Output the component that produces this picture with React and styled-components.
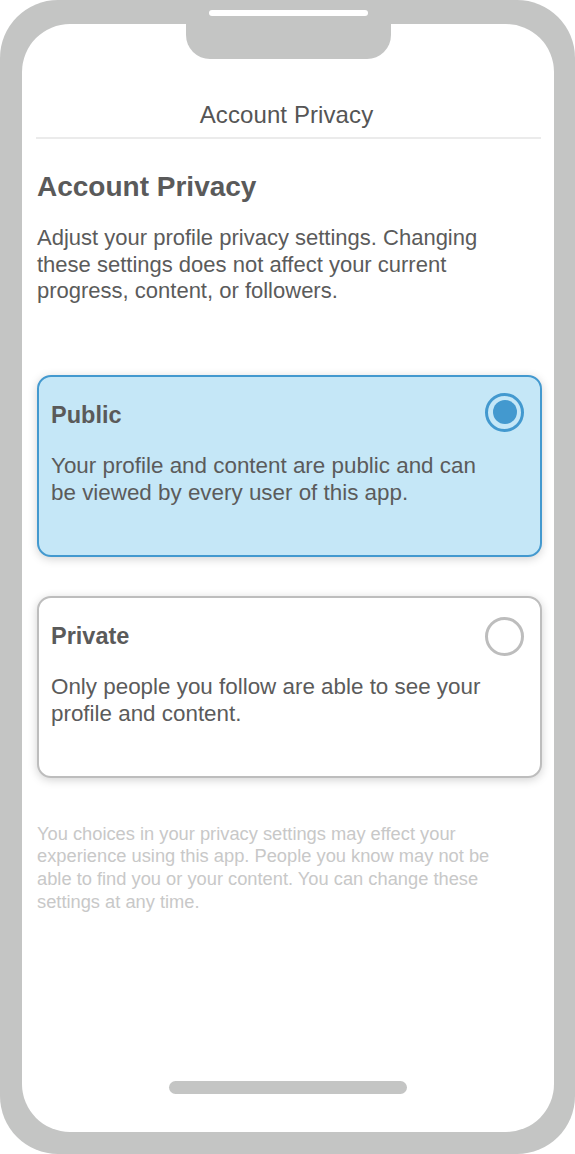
import styled, { createGlobalStyle } from "styled-components";

const options = [
  {
    id: "public",
    title: "Public",
    text: "Your profile and content are public and can be viewed by every user of this app.",
    selected: true,
  },
  {
    id: "private",
    title: "Private",
    text: "Only people you follow are able to see your profile and content.",
    selected: false,
  },
];

const GlobalStyle = createGlobalStyle`
  html, body {
    margin: 0;
    padding: 0;
    background: #ffffff;
  }
  body {
    font-family: "Liberation Sans", Arial, sans-serif;
    color: #5b5b5b;
  }
`;

const Phone = styled.div`
  position: relative;
  box-sizing: border-box;
  width: 575px;
  height: 1154px;
  padding: 24px 21px 22px 22px;
  background: #c4c5c4;
  border-radius: 58px;
`;

const Speaker = styled.div`
  position: absolute;
  top: 10px;
  left: 209px;
  width: 159px;
  height: 6px;
  border-radius: 3px;
  background: #ffffff;
`;

const Screen = styled.div`
  position: relative;
  height: 100%;
  background: #ffffff;
  border-radius: 48px;
  display: flex;
  flex-direction: column;
`;

const Notch = styled.div`
  position: absolute;
  top: -1px;
  left: 164px;
  width: 205px;
  height: 36px;
  background: #c4c5c4;
  border-radius: 0 0 24px 24px;
`;

const Header = styled.div`
  margin: 0 13px 0 14px;
  padding: 78px 4px 9px 0;
  border-bottom: 2px solid #ebebeb;
  text-align: center;
  font-size: 24px;
  line-height: 26px;
  letter-spacing: 0.1px;
  color: #555555;
`;

const Body = styled.div`
  flex: 1;
  display: flex;
  flex-direction: column;
  padding: 0 12px 0 15px;
`;

const Heading = styled.h1`
  margin: 33px 0 0;
  font-size: 28px;
  line-height: 30px;
  font-weight: 700;
  color: #5a5a5a;
`;

const Intro = styled.p`
  margin: 23px 0 0;
  max-width: 480px;
  font-size: 22px;
  line-height: 26.5px;
  color: #5b5b5b;
`;

const Cards = styled.div`
  display: flex;
  flex-direction: column;
  gap: 39px;
  margin-top: 70px;
`;

const Card = styled.div`
  box-sizing: border-box;
  height: 182px;
  padding: 19px 16px 0 12px;
  border-radius: 14px;
  border: 2px solid ${(p) => (p.$active ? "#4399cf" : "#bdbdbd")};
  background: ${(p) => (p.$active ? "#c5e7f7" : "#ffffff")};
  box-shadow: 0 2px 10px rgba(0, 0, 0, 0.18);
`;

const CardTop = styled.div`
  height: 39px;
  display: flex;
  align-items: center;
  justify-content: space-between;
`;

const CardTitle = styled.div`
  font-size: 23.5px;
  line-height: 28px;
  font-weight: 700;
  color: #5a5a5a;
`;

const Radio = styled.div`
  box-sizing: border-box;
  width: 39px;
  height: 39px;
  border-radius: 50%;
  border: 3px solid ${(p) => (p.$active ? "#4399cf" : "#bdbdbd")};
  display: flex;
  align-items: center;
  justify-content: center;
  background: ${(p) => (p.$active ? "transparent" : "#ffffff")};
  transform: translateY(${(p) => (p.$active ? "-3px" : "0")});

  &::after {
    content: "";
    display: ${(p) => (p.$active ? "block" : "none")};
    width: 24px;
    height: 24px;
    border-radius: 50%;
    background: #4399cf;
  }
`;

const CardText = styled.p`
  margin: 17px 0 0;
  max-width: 440px;
  font-size: 22.4px;
  line-height: 27px;
  color: #5b5b5b;
`;

const Note = styled.p`
  margin: 45px 0 0;
  max-width: 470px;
  font-size: 18.3px;
  line-height: 22.7px;
  color: #c8c8c8;
`;

const HomeBar = styled.div`
  align-self: center;
  width: 238px;
  height: 13px;
  margin: auto 0 38px;
  border-radius: 7px;
  background: #c4c5c4;
`;

export default function App() {
  return (
    <>
      <GlobalStyle />
      <Phone>
        <Speaker />
        <Screen>
          <Notch />
          <Header>Account Privacy</Header>
          <Body>
            <Heading>Account Privacy</Heading>
            <Intro>
              Adjust your profile privacy settings. Changing these settings does
              not affect your current progress, content, or followers.
            </Intro>
            <Cards>
              {options.map((o) => (
                <Card key={o.id} $active={o.selected}>
                  <CardTop>
                    <CardTitle>{o.title}</CardTitle>
                    <Radio $active={o.selected} />
                  </CardTop>
                  <CardText>{o.text}</CardText>
                </Card>
              ))}
            </Cards>
            <Note>
              You choices in your privacy settings may effect your experience
              using this app. People you know may not be able to find you or
              your content. You can change these settings at any time.
            </Note>
          </Body>
          <HomeBar />
        </Screen>
      </Phone>
    </>
  );
}
